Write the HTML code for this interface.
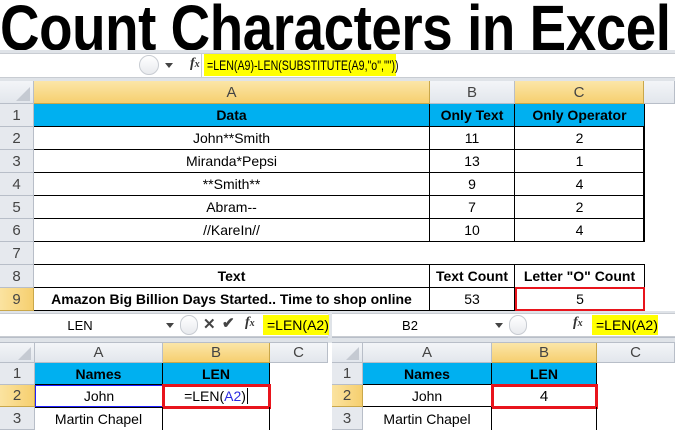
<!DOCTYPE html>
<html><head><meta charset="utf-8"><style>
*{margin:0;padding:0;box-sizing:border-box}
body{width:675px;height:430px;overflow:hidden;background:#fff;font-family:"Liberation Sans",sans-serif;position:relative}
.a{position:absolute}
.c{position:absolute;display:flex;align-items:center;justify-content:center;font-size:14px;color:#000;white-space:nowrap;overflow:hidden}
.hd{background:linear-gradient(#f3f5f8,#e2e6ec);color:#444;font-size:15px;border-right:1px solid #b8bec8;border-bottom:1px solid #b8bec8}
.hs{background:linear-gradient(#fbe6a8,#f6cf6f);color:#444;font-size:15px;border-right:1px solid #c9a74a;border-bottom:1px solid #c9a74a}
.rn{background:#e6e9ee;color:#444;font-size:15px;border-bottom:1px solid #b8bec8;border-right:1px solid #b8bec8}
.rs{background:linear-gradient(90deg,#fbe3a0,#f6cf6f);color:#444;font-size:15px;border-bottom:1px solid #c9a74a;border-right:1px solid #c9a74a}
.bl{background:#00b0f0;font-weight:bold}
.b{font-weight:bold}
.fb{background:#fff;border-top:1px solid #c8ccd2;border-bottom:1px solid #c8ccd2}
.y{background:#ffff00;font-size:14px;display:flex;align-items:center;padding-left:4px;white-space:nowrap;overflow:hidden}
</style></head><body>
<div class="a" style="left:0;top:-9px;width:800px;font-size:64px;font-weight:bold;white-space:nowrap;transform-origin:0 0;transform:scaleX(0.855);letter-spacing:-0.5px">Count Characters in Excel</div>

<!-- top formula bar -->
<div class="a" style="left:0;top:50px;width:675px;height:3px;background:#dfe3e8"></div>
<div class="a fb" style="left:0;top:53px;width:675px;height:25px"></div>
<div class="a" style="left:165px;top:63px;border:4px solid transparent;border-top:5px solid #444"></div>
<div class="a" style="left:139px;top:55px;width:20px;height:20px;border-radius:10px;border:1px solid #c8ccd2;background:linear-gradient(#fff,#e8eaee)"></div>
<div class="a" style="left:190px;top:56px;font:italic bold 14px 'Liberation Serif',serif;color:#333">f<span style="font-size:10px">x</span></div>
<div class="a" style="left:201px;top:54px;width:1px;height:23px;background:#c8ccd2"></div>
<div class="a" style="left:204px;top:54px;width:192px;height:22px;background:#ffff00"></div>
<div class="a" style="left:207px;top:54px;height:22px;line-height:22px;font-size:14px;white-space:nowrap;transform-origin:0 50%;transform:scaleX(0.76)">=LEN(A9)-LEN(SUBSTITUTE(A9,"o",""))</div>
<div class="a" style="left:0;top:78px;width:675px;height:3px;background:#dfe3e8"></div>

<!-- top grid headers -->
<div class="c hd" style="left:0;top:81px;width:34px;height:23px"></div>
<div class="a" style="left:16px;top:87px;border-left:14px solid transparent;border-bottom:14px solid #c5cad2"></div>
<div class="c hs" style="left:34px;top:81px;width:396px;height:23px">A</div>
<div class="c hd" style="left:430px;top:81px;width:85px;height:23px">B</div>
<div class="c hs" style="left:515px;top:81px;width:129px;height:23px">C</div>
<div class="c hd" style="left:644px;top:81px;width:31px;height:23px"></div>

<!-- row numbers -->
<div class="c rn" style="left:0;top:104px;width:34px;height:23px">1</div>
<div class="c rn" style="left:0;top:127px;width:34px;height:23px">2</div>
<div class="c rn" style="left:0;top:150px;width:34px;height:23px">3</div>
<div class="c rn" style="left:0;top:173px;width:34px;height:23px">4</div>
<div class="c rn" style="left:0;top:196px;width:34px;height:23px">5</div>
<div class="c rn" style="left:0;top:219px;width:34px;height:23px">6</div>
<div class="c rn" style="left:0;top:242px;width:34px;height:23px">7</div>
<div class="c rn" style="left:0;top:265px;width:34px;height:23px">8</div>
<div class="c rs" style="left:0;top:288px;width:34px;height:23px">9</div>

<!-- table 1 -->
<div class="a" style="left:34px;top:104px;width:610px;height:138px;border-right:1px solid #000"></div>
<div class="c bl" style="left:34px;top:104px;width:396px;height:23px;border-bottom:1px solid #000;border-right:1px solid #000">Data</div>
<div class="c bl" style="left:430px;top:104px;width:85px;height:23px;border-bottom:1px solid #000;border-right:1px solid #000">Only Text</div>
<div class="c bl" style="left:515px;top:104px;width:130px;height:23px;border-bottom:1px solid #000;border-right:1px solid #000">Only Operator</div>

<div class="c" style="left:34px;top:127px;width:396px;height:23px;border-bottom:1px solid #000;border-right:1px solid #000">John**Smith</div>
<div class="c" style="left:430px;top:127px;width:85px;height:23px;border-bottom:1px solid #000;border-right:1px solid #000">11</div>
<div class="c" style="left:515px;top:127px;width:130px;height:23px;border-bottom:1px solid #000;border-right:1px solid #000">2</div>
<div class="c" style="left:34px;top:150px;width:396px;height:23px;border-bottom:1px solid #000;border-right:1px solid #000">Miranda*Pepsi</div>
<div class="c" style="left:430px;top:150px;width:85px;height:23px;border-bottom:1px solid #000;border-right:1px solid #000">13</div>
<div class="c" style="left:515px;top:150px;width:130px;height:23px;border-bottom:1px solid #000;border-right:1px solid #000">1</div>
<div class="c" style="left:34px;top:173px;width:396px;height:23px;border-bottom:1px solid #000;border-right:1px solid #000">**Smith**</div>
<div class="c" style="left:430px;top:173px;width:85px;height:23px;border-bottom:1px solid #000;border-right:1px solid #000">9</div>
<div class="c" style="left:515px;top:173px;width:130px;height:23px;border-bottom:1px solid #000;border-right:1px solid #000">4</div>
<div class="c" style="left:34px;top:196px;width:396px;height:23px;border-bottom:1px solid #000;border-right:1px solid #000">Abram--</div>
<div class="c" style="left:430px;top:196px;width:85px;height:23px;border-bottom:1px solid #000;border-right:1px solid #000">7</div>
<div class="c" style="left:515px;top:196px;width:130px;height:23px;border-bottom:1px solid #000;border-right:1px solid #000">2</div>
<div class="c" style="left:34px;top:219px;width:396px;height:23px;border-bottom:1px solid #000;border-right:1px solid #000">//KareIn//</div>
<div class="c" style="left:430px;top:219px;width:85px;height:23px;border-bottom:1px solid #000;border-right:1px solid #000">10</div>
<div class="c" style="left:515px;top:219px;width:130px;height:23px;border-bottom:1px solid #000;border-right:1px solid #000">4</div>

<!-- table 2 -->
<div class="c b" style="left:34px;top:264px;width:396px;height:24px;border-top:1px solid #000;border-bottom:1px solid #000;border-right:1px solid #000">Text</div>
<div class="c b" style="left:430px;top:264px;width:85px;height:24px;border-top:1px solid #000;border-bottom:1px solid #000;border-right:1px solid #000">Text Count</div>
<div class="c b" style="left:515px;top:264px;width:130px;height:24px;border-top:1px solid #000;border-bottom:1px solid #000;border-right:1px solid #000">Letter "O" Count</div>
<div class="c b" style="left:34px;top:288px;width:396px;height:23px;border-bottom:1px solid #000;border-right:1px solid #000">Amazon Big Billion Days Started.. Time to shop online</div>
<div class="c" style="left:430px;top:288px;width:85px;height:23px;border-bottom:1px solid #000;border-right:1px solid #000">53</div>
<div class="c" style="left:515px;top:287px;width:130px;height:24px;border:2px solid #e8141c">5</div>

<!-- bottom panels formula bar -->
<div class="a" style="left:0;top:311px;width:675px;height:2px;background:#dfe3e8"></div>
<div class="a fb" style="left:0;top:313px;width:675px;height:24px"></div>
<div class="a" style="left:0;top:337px;width:675px;height:6px;background:#dfe3e8;border-top:1px solid #b8bec8;border-bottom:1px solid #b8bec8"></div>
<div class="a" style="left:328px;top:311px;width:4px;height:32px;background:#dfe3e8"></div>
<!-- left -->
<div class="c" style="left:40px;top:315px;width:80px;height:20px;font-size:13px">LEN</div>
<div class="a" style="left:166px;top:323px;border:4px solid transparent;border-top:5px solid #444"></div>
<div class="a" style="left:180px;top:315px;width:18px;height:20px;border-radius:10px;border:1px solid #c8ccd2;background:linear-gradient(#fff,#e8eaee)"></div>
<div class="a" style="left:203px;top:315px;font-size:15px;font-weight:bold;color:#444">✕</div>
<div class="a" style="left:222px;top:314px;font-size:15px;font-weight:bold;color:#444">✔</div>
<div class="a" style="left:245px;top:315px;font:italic bold 14px 'Liberation Serif',serif;color:#333">f<span style="font-size:10px">x</span></div>
<div class="a y" style="left:263px;top:315px;width:66px;height:20px">=LEN(A2)</div>
<!-- right -->
<div class="c" style="left:370px;top:315px;width:80px;height:20px;font-size:13px">B2</div>
<div class="a" style="left:495px;top:323px;border:4px solid transparent;border-top:5px solid #444"></div>
<div class="a" style="left:509px;top:315px;width:18px;height:20px;border-radius:10px;border:1px solid #c8ccd2;background:linear-gradient(#fff,#e8eaee)"></div>
<div class="a" style="left:573px;top:315px;font:italic bold 14px 'Liberation Serif',serif;color:#333">f<span style="font-size:10px">x</span></div>
<div class="a y" style="left:592px;top:315px;width:66px;height:20px">=LEN(A2)</div>

<!-- left grid -->
<div class="c hd" style="left:0;top:343px;width:35px;height:20px"></div>
<div class="a" style="left:18px;top:347px;border-left:13px solid transparent;border-bottom:13px solid #c5cad2"></div>
<div class="c hd" style="left:35px;top:343px;width:128px;height:20px">A</div>
<div class="c hs" style="left:163px;top:343px;width:107px;height:20px">B</div>
<div class="c hd" style="left:270px;top:343px;width:58px;height:20px">C</div>
<div class="c rn" style="left:0;top:363px;width:35px;height:22px">1</div>
<div class="c rs" style="left:0;top:385px;width:35px;height:22px">2</div>
<div class="c rn" style="left:0;top:407px;width:35px;height:23px">3</div>
<div class="c bl" style="left:35px;top:363px;width:128px;height:22px;border-right:1px solid #000;border-bottom:1px solid #000">Names</div>
<div class="c bl" style="left:163px;top:363px;width:107px;height:22px;border-right:1px solid #000;border-bottom:1px solid #000">LEN</div>
<div class="c" style="left:35px;top:385px;width:128px;height:22px;border:1px solid #1f1fff">John</div>
<div class="c" style="left:163px;top:385px;width:107px;height:22px;border-right:1px solid #000">=LEN(<span style="color:#2a2ae0">A2</span>)<span style="display:inline-block;width:1px;height:16px;background:#000;margin-left:1px"></span></div>
<div class="a" style="left:162px;top:384px;width:109px;height:25px;border:3px solid #e8141c"></div>
<div class="c" style="left:35px;top:407px;width:128px;height:23px;border-top:1px solid #000;border-right:1px solid #000">Martin Chapel</div>
<div class="c" style="left:163px;top:407px;width:107px;height:23px;border-right:1px solid #000"></div>

<!-- right grid -->
<div class="c hd" style="left:332px;top:343px;width:31px;height:20px"></div>
<div class="a" style="left:346px;top:347px;border-left:13px solid transparent;border-bottom:13px solid #c5cad2"></div>
<div class="c hd" style="left:363px;top:343px;width:129px;height:20px">A</div>
<div class="c hs" style="left:492px;top:343px;width:105px;height:20px">B</div>
<div class="c hd" style="left:597px;top:343px;width:78px;height:20px">C</div>
<div class="c rn" style="left:332px;top:363px;width:31px;height:22px">1</div>
<div class="c rs" style="left:332px;top:385px;width:31px;height:22px">2</div>
<div class="c rn" style="left:332px;top:407px;width:31px;height:23px">3</div>
<div class="c bl" style="left:363px;top:363px;width:129px;height:22px;border-right:1px solid #000;border-bottom:1px solid #000">Names</div>
<div class="c bl" style="left:492px;top:363px;width:105px;height:22px;border-right:1px solid #000;border-bottom:1px solid #000">LEN</div>
<div class="c" style="left:363px;top:385px;width:129px;height:22px;border-right:1px solid #000;border-bottom:1px solid #000">John</div>
<div class="c" style="left:492px;top:385px;width:105px;height:22px;border-right:1px solid #000;font-size:15px">4</div>
<div class="a" style="left:491px;top:384px;width:107px;height:25px;border:3px solid #e8141c"></div>
<div class="c" style="left:363px;top:407px;width:129px;height:23px;border-right:1px solid #000">Martin Chapel</div>
<div class="c" style="left:492px;top:407px;width:105px;height:23px;border-right:1px solid #000"></div>
</body></html>
